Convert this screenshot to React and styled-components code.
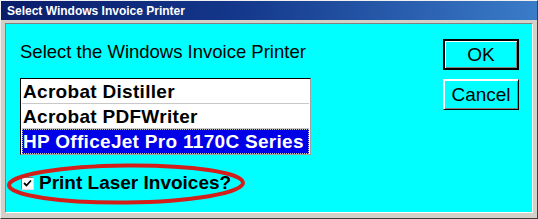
import React, { useState } from "react";
import styled, { createGlobalStyle } from "styled-components";

const GlobalStyle = createGlobalStyle`
  html, body { margin: 0; padding: 0; background: #d4d0c8; }
  body { font-family: "Liberation Sans", Arial, sans-serif; }
`;

const printers = [
  "Acrobat Distiller",
  "Acrobat PDFWriter",
  "HP OfficeJet Pro 1170C Series",
];

const App = () => {
  const [selected, setSelected] = useState(2);
  const [laser, setLaser] = useState(true);

  return (
    <>
      <GlobalStyle />
      <Window>
        <TitleBar>Select Windows Invoice Printer</TitleBar>
        <Client>
          <LeftColumn>
            <Prompt>Select the Windows Invoice Printer</Prompt>
            <ListBox>
              {printers.map((name, i) => (
                <ListItem
                  key={name}
                  $selected={i === selected}
                  $last={i === printers.length - 1}
                  onClick={() => setSelected(i)}
                >
                  {name}
                </ListItem>
              ))}
            </ListBox>
            <CheckRow onClick={() => setLaser(!laser)}>
              <CheckBox>
                {laser && (
                  <svg width="9" height="9" viewBox="0 0 9 9">
                    <path d="M1 4 L3.5 6.5 L8 1.5" fill="none" stroke="#000" strokeWidth="1.8" />
                  </svg>
                )}
              </CheckBox>
              <CheckLabel>Print Laser Invoices?</CheckLabel>
            </CheckRow>
          </LeftColumn>
          <ButtonColumn>
            <Button $default>OK</Button>
            <Button>Cancel</Button>
          </ButtonColumn>
          <Circle width="242" height="44" viewBox="0 0 242 44">
            <ellipse cx="120" cy="21" rx="117" ry="18.5" fill="none" stroke="#d41e1a" strokeWidth="4" transform="rotate(-0.6 120 21)" />
          </Circle>
        </Client>
      </Window>
    </>
  );
};

export default App;

const Window = styled.div`
  width: 538px;
  height: 219px;
  box-sizing: border-box;
  background: #d4d0c8;
  border-top: 1px solid #f0f0f0;
  border-left: 1px solid #f0f0f0;
  border-right: 1px solid #404040;
  border-bottom: 1px solid #404040;
  padding: 0 4px 5px 4px;
  display: flex;
  flex-direction: column;
`;

const TitleBar = styled.div`
  height: 19px;
  margin: 0 -4px;
  padding-left: 6px;
  display: flex;
  align-items: center;
  background: linear-gradient(to right, #0a1c6a 0%, #14388c 45%, #3a7cc8 100%);
  color: #fff;
  font-weight: bold;
  font-size: 12px;
`;

const Client = styled.div`
  position: relative;
  flex: 1;
  margin-top: 3px;
  background: #00ffff;
  border-top: 1px solid #808080;
  border-left: 1px solid #808080;
  border-right: 1px solid #ffffff;
  border-bottom: 1px solid #ffffff;
  display: flex;
  justify-content: space-between;
  padding: 0 13px 0 14px;
`;

const LeftColumn = styled.div`
  display: flex;
  flex-direction: column;
  padding-top: 17px;
`;

const Prompt = styled.div`
  font-size: 18.5px;
  line-height: 21px;
  color: #000;
`;

const ListBox = styled.div`
  margin-top: 16px;
  width: 291px;
  background: #fff;
  border-top: 1px solid #000;
  border-left: 1px solid #000;
  border-right: 1px solid #a0a0a0;
  border-bottom: 1px solid #a0a0a0;
  box-sizing: border-box;
  padding: 0 1px;
`;

const ListItem = styled.div`
  height: 25px;
  line-height: 25px;
  padding-left: 1px;
  font-size: 19px;
  letter-spacing: 0.3px;
  font-weight: bold;
  box-sizing: border-box;
  color: ${p => (p.$selected ? "#fff" : "#000")};
  background: ${p => (p.$selected ? "#0000e8" : "#fff")};
  border-bottom: ${p => (p.$last ? "none" : "1px solid #c8c8c8")};
  outline: ${p => (p.$selected ? "1px dotted #c0c0c0" : "none")};
  outline-offset: -1px;
  white-space: nowrap;
  cursor: default;
`;

const CheckRow = styled.div`
  margin-top: 17px;
  display: flex;
  align-items: center;
  gap: 5px;
  cursor: default;
`;

const CheckBox = styled.div`
  width: 11px;
  height: 11px;
  background: #fff;
  border-top: 1px solid #808080;
  border-left: 1px solid #808080;
  border-right: 1px solid #e0e0e0;
  border-bottom: 1px solid #e0e0e0;
  display: flex;
  align-items: center;
  justify-content: center;
  margin-left: 1px;
`;

const CheckLabel = styled.span`
  font-size: 19px;
  font-weight: bold;
  line-height: 22px;
  color: #000;
`;

const ButtonColumn = styled.div`
  display: flex;
  flex-direction: column;
  gap: 9px;
  padding-top: 15px;
`;

const Button = styled.button`
  width: 76px;
  height: 31px;
  box-sizing: border-box;
  background: #00ffff;
  font-family: "Liberation Sans", Arial, sans-serif;
  font-size: 19px;
  color: #000;
  padding: 0;
  border: ${p => (p.$default ? "2px solid #000" : "1px solid #000")};
  box-shadow: inset 1px 1px 0 #ffffff, inset -1px -1px 0 #808080;
  border-top-color: ${p => (p.$default ? "#000" : "#ffffff")};
  border-left-color: ${p => (p.$default ? "#000" : "#ffffff")};
`;

const Circle = styled.svg`
  position: absolute;
  left: 0;
  top: 139px;
  pointer-events: none;
`;
